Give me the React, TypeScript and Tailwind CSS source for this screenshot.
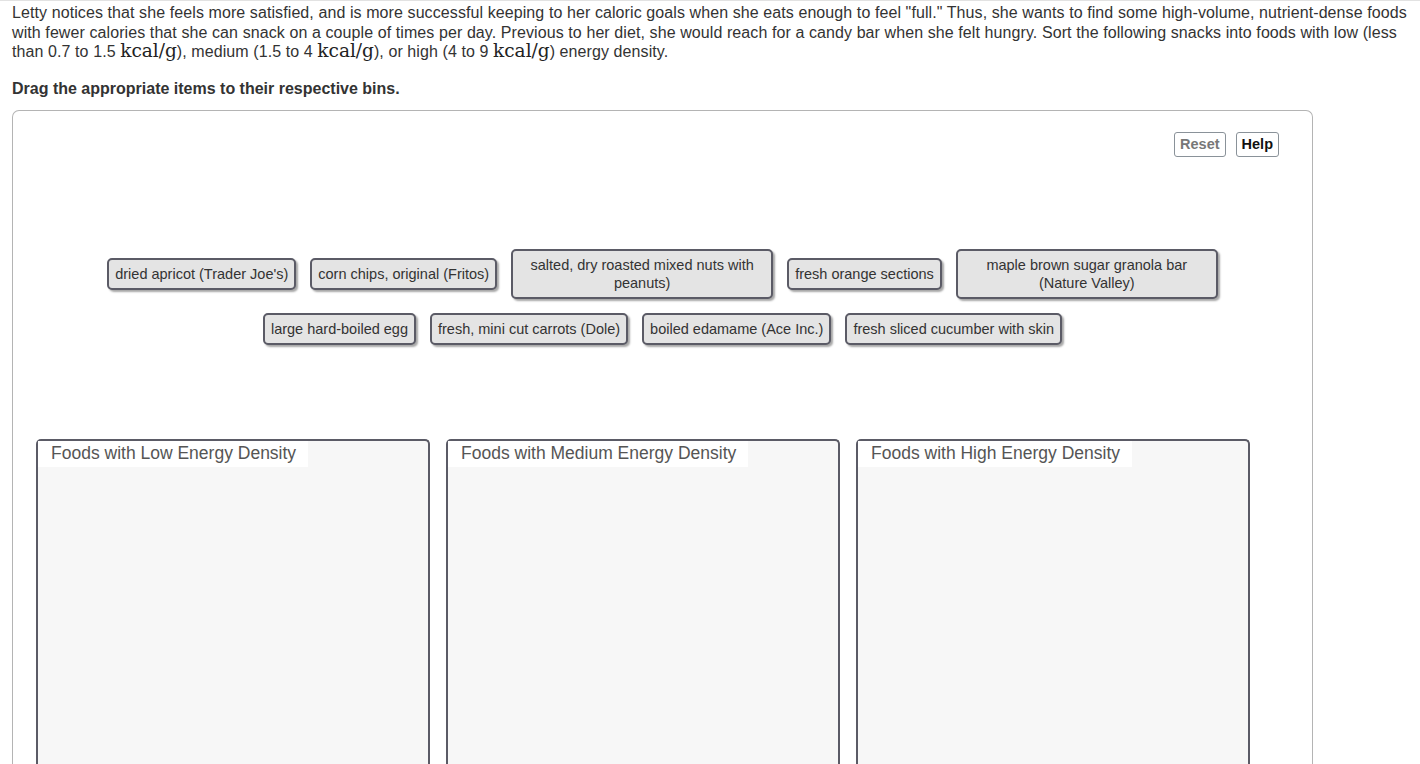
const FONT = { fontFamily: '"Liberation Sans", Arial, sans-serif' }

const rowOne = [
  { label: 'dried apricot (Trader Joe\'s)' },
  { label: 'corn chips, original (Fritos)' },
  { label: 'salted, dry roasted mixed nuts with peanuts)', wide: true },
  { label: 'fresh orange sections' },
  { label: 'maple brown sugar granola bar (Nature Valley)', wide: true },
]

const rowTwo = [
  { label: 'large hard-boiled egg' },
  { label: 'fresh, mini cut carrots (Dole)' },
  { label: 'boiled edamame (Ace Inc.)' },
  { label: 'fresh sliced cucumber with skin' },
]

const bins = [
  'Foods with Low Energy Density',
  'Foods with Medium Energy Density',
  'Foods with High Energy Density',
]

function Kcal() {
  return (
    <span className="text-[18.5px] leading-none tracking-normal text-[#222]" style={{ fontFamily: '"DejaVu Serif", "Liberation Serif", serif' }}>
      kcal/g
    </span>
  )
}

function Chip({ label, wide }: { label: string; wide?: boolean }) {
  return (
    <div
      className={
        wide
          ? 'mx-[7px] w-[262px] rounded-[5px] border-2 border-[#5b5b66] bg-[#e4e4e4] px-[12px] py-[5px] text-center text-[14.5px] leading-[18px] text-[#333] shadow-[2px_2px_2px_rgba(0,0,0,0.35)]'
          : 'mx-[7px] rounded-[5px] border-2 border-[#5b5b66] bg-[#e4e4e4] px-[6px] py-[5px] text-center text-[14.5px] leading-[18px] text-[#333] shadow-[2px_2px_2px_rgba(0,0,0,0.35)]'
      }
    >
      {label}
    </div>
  )
}

export default function App() {
  return (
    <div className="min-h-[764px] border-t border-[#e2e2e2] bg-white pl-[12px] pr-[8px] pt-[2px] text-[#333]" style={FONT}>
      <p className="text-[16px] leading-[19.5px] tracking-[0.09px]">
        Letty notices that she feels more satisfied, and is more successful keeping to her caloric goals when she eats enough to feel "full." Thus, she wants to find some high-volume, nutrient-dense foods with fewer calories that she can snack on a couple of times per day. Previous to her diet, she would reach for a candy bar when she felt hungry. Sort the following snacks into foods with low (less than 0.7 to 1.5 <Kcal />), medium (1.5 to 4 <Kcal />), or high (4 to 9 <Kcal />) energy density.
      </p>

      <p className="mt-[17px] text-[16px] font-bold leading-[19px] text-[#333]">Drag the appropriate items to their respective bins.</p>

      <div className="mt-[12px] mr-[99px] h-[700px] rounded-t-[7px] border border-b-0 border-[#b4b4b4]">
        <div className="flex justify-end gap-[10px] pr-[33px] pt-[21px]">
          <button className="rounded-[3px] border border-[#8a9299] bg-white px-[5px] py-[1px] text-[14.5px] font-bold text-[#777]">Reset</button>
          <button className="rounded-[3px] border border-[#8a9299] bg-white px-[5px] py-[1px] text-[14.5px] font-bold text-[#111]">Help</button>
        </div>

        <div className="mt-[92px] flex flex-col items-center gap-[14px]">
          <div className="flex items-center justify-center">
            {rowOne.map((c) => (
              <Chip key={c.label} label={c.label} wide={c.wide} />
            ))}
          </div>
          <div className="flex items-center justify-center">
            {rowTwo.map((c) => (
              <Chip key={c.label} label={c.label} />
            ))}
          </div>
        </div>

        <div className="mt-[94px] flex gap-[16px] pl-[23px]">
          {bins.map((b) => (
            <div key={b} className="h-[340px] w-[394px] rounded-t-[5px] border-2 border-b-0 border-[#5b5b66] bg-[#f7f7f7]">
              <div className="inline-block bg-white pl-[13px] pr-[12px] pt-[2px] pb-[3px] text-[17.5px] leading-[21px] text-[#555]">
                {b}
              </div>
            </div>
          ))}
        </div>
      </div>
    </div>
  )
}
